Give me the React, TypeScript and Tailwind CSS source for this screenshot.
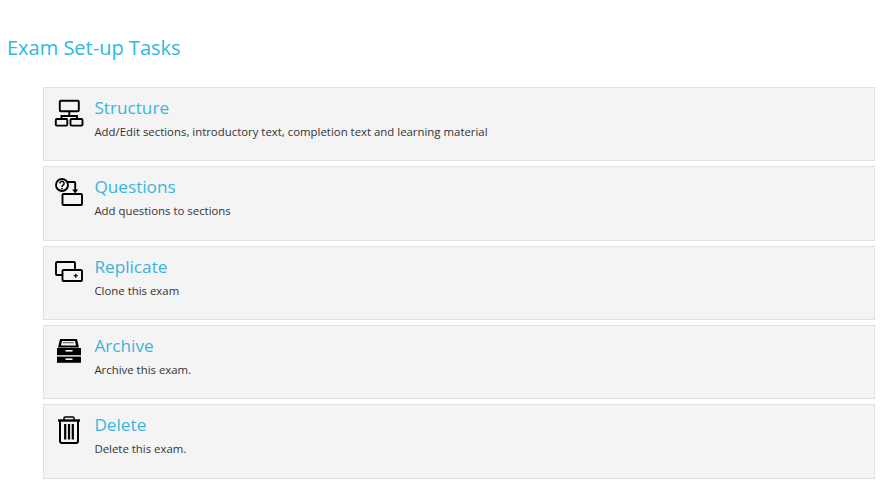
import type { ReactNode } from "react";

const StructureIcon = (
  <svg width="30" height="30" viewBox="0 0 30 30" fill="none" stroke="#000" strokeWidth="1.9">
    <rect x="5.8" y="2.8" width="19" height="10.4" rx="1" />
    <path d="M15.3 13v5M7.5 21v-3h15.5v3" />
    <rect x="1.8" y="21" width="11.5" height="6.6" rx="1.2" />
    <rect x="16.5" y="21" width="12" height="6.6" rx="1.2" />
  </svg>
);

const QuestionsIcon = (
  <svg width="30" height="30" viewBox="0 0 30 30" fill="none" stroke="#000">
    <circle cx="8" cy="8" r="6" strokeWidth="1.9" />
    <path d="M5.9 6.4a2.1 2.1 0 1 1 3.2 1.8c-.8.5-1.1.9-1.1 1.7" strokeWidth="1.5" />
    <circle cx="8" cy="11.6" r=".9" fill="#000" stroke="none" />
    <path d="M14 5h6.2a1 1 0 0 1 1 1v7" strokeWidth="1.9" />
    <path d="M18.2 12.4h6l-3 4z" fill="#000" stroke="none" />
    <rect x="8.5" y="17" width="19.5" height="11" rx="1" strokeWidth="1.9" />
  </svg>
);

const ReplicateIcon = (
  <svg width="30" height="30" viewBox="0 0 30 30" fill="none" stroke="#000" strokeWidth="1.9">
    <path d="M8 18H3a1 1 0 0 1-1-1V6a1 1 0 0 1 1-1h17a1 1 0 0 1 1 1v7" />
    <rect x="8.5" y="13" width="19.5" height="11" rx="1" />
    <path d="M21.7 16.7v4M19.7 18.7h4" strokeWidth="1.3" />
  </svg>
);

const ArchiveIcon = (
  <svg width="30" height="30" viewBox="0 0 30 30" fill="#000">
    <path fillRule="evenodd" d="M6 3h17l2 8.5H4zM8 5l-1 4.5h15l-1-4.5z" />
    <path d="M3 12h24v7.2H3z" />
    <path d="M3 20.6h24v6.2H3z" />
    <rect x="11.5" y="14" width="7" height="1.6" fill="#f4f4f4" />
    <rect x="11.5" y="22.4" width="7" height="1.6" fill="#f4f4f4" />
    <rect x="9" y="6.2" width="11" height="1" fill="#555" />
  </svg>
);

const DeleteIcon = (
  <svg width="30" height="30" viewBox="0 0 30 30" fill="none" stroke="#000" strokeWidth="2">
    <path d="M4 5.5h22" strokeWidth="2.4" />
    <path d="M10 5V3a1 1 0 0 1 1-1h8a1 1 0 0 1 1 1v2" strokeWidth="1.5" />
    <path d="M6 6v20a2 2 0 0 0 2 2h14a2 2 0 0 0 2-2V6" />
    <path d="M11.2 9v15.5M15 9v15.5M18.8 9v15.5" strokeWidth="2.2" />
  </svg>
);

const TASKS: { title: string; text: string; icon: ReactNode }[] = [
  { title: "Structure", text: "Add/Edit sections, introductory text, completion text and learning material", icon: StructureIcon },
  { title: "Questions", text: "Add questions to sections", icon: QuestionsIcon },
  { title: "Replicate", text: "Clone this exam", icon: ReplicateIcon },
  { title: "Archive", text: "Archive this exam.", icon: ArchiveIcon },
  { title: "Delete", text: "Delete this exam.", icon: DeleteIcon },
];

export default function App() {
  return (
    <div className="min-h-[502px] bg-white pt-[34px] pl-[7px] pr-[19px] font-['Open_Sans',sans-serif]">
      <h1 className="text-xl leading-[28px] font-normal text-[#2fb8e0]">Exam Set-up Tasks</h1>
      <div className="mt-[25px] ml-[36px] flex flex-col gap-[4.83px]">
        {TASKS.map((task) => (
          <div
            key={task.title}
            className="flex h-[74.45px] border border-[#e1e1e1] bg-[#f4f4f4] pt-[9px] pl-[10px]"
          >
            <div className="mt-px w-[30px] shrink-0">{task.icon}</div>
            <div className="ml-[10.4px]">
              <div className="text-[17.2px] leading-[22px] text-[#3ab4dc]">{task.title}</div>
              <p className="mt-[5px] text-[11.4px] leading-[16px] text-[#333]">{task.text}</p>
            </div>
          </div>
        ))}
      </div>
    </div>
  );
}
